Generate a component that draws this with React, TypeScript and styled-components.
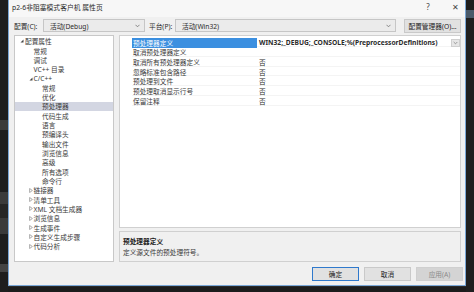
import React from "react";
import styled, { createGlobalStyle } from "styled-components";

const Global = createGlobalStyle`
  html, body { margin: 0; padding: 0; background: #1b1b1c; }
  body { font-family: "Noto Sans", "Noto Sans CJK SC", sans-serif; }
`;

const FONT = `"Noto Sans", "Noto Sans CJK SC", sans-serif`;

const Page = styled.div`
  width: 474px;
  height: 292px;
  display: grid;
  grid-template-columns: 8px 458px 8px;
  grid-template-rows: 286px 6px;
  background: #1b1b1c;
  overflow: hidden;
`;

const SideStrip = styled.div<{ $col: number }>`
  grid-column: ${(p) => p.$col};
  grid-row: 1 / span 2;
  display: flex;
  flex-direction: column;
  background: #1e1e1e;
`;

const Band = styled.div<{ $h: number; $c: string }>`
  height: ${(p) => p.$h}px;
  background: ${(p) => p.$c};
  flex: none;
`;

const Dialog = styled.div`
  grid-column: 2;
  grid-row: 1;
  background: #f0f0f0;
  border: 1px solid #7aa7d6;
  border-top: none;
  display: flex;
  flex-direction: column;
  font-family: ${FONT};
  font-size: 6.7px;
  color: #000;
  box-sizing: border-box;
  min-width: 0;
`;

const TitleBar = styled.div`
  height: 17px;
  box-sizing: border-box;
  display: flex;
  align-items: center;
  padding: 0 0 4px 3px;
  background: #f7f7f7;
  font-size: 6.8px;
  color: #2a2a2a;
`;

const TitleText = styled.div`
  flex: 1;
`;

const TitleBtn = styled.div<{ $w: number }>`
  width: ${(p) => p.$w}px;
  flex: none;
  text-align: center;
  font-size: 8px;
  color: #444;
`;

const ConfigRow = styled.div`
  display: flex;
  align-items: center;
  height: 13px;
  margin: 2px 4px 0 5px;
`;

const Label = styled.div<{ $w: number; $pad?: number }>`
  width: ${(p) => p.$w}px;
  padding-left: ${(p) => p.$pad ?? 0}px;
  box-sizing: border-box;
  flex: none;
  color: #2a2a2a;
`;

const Combo = styled.div<{ $w: number }>`
  width: ${(p) => p.$w}px;
  height: 13px;
  box-sizing: border-box;
  border: 1px solid #c6c6c6;
  background: #ebebeb;
  display: flex;
  align-items: center;
  padding-left: 6px;
  flex: none;
  color: #2a2a2a;
`;

const ComboText = styled.div`
  flex: 1;
`;

const Chevron = styled.svg`
  width: 5px;
  height: 4px;
  margin-right: 4px;
`;

const Spacer = styled.div<{ $w: number }>`
  width: ${(p) => p.$w}px;
  flex: none;
`;

const Button = styled.div<{ $w: number; $kind?: "default" | "disabled" | "normal" }>`
  width: ${(p) => p.$w}px;
  height: 14px;
  box-sizing: border-box;
  display: flex;
  align-items: center;
  justify-content: center;
  flex: none;
  border: 1px solid
    ${(p) => (p.$kind === "default" ? "#2f79cc" : p.$kind === "disabled" ? "#cfcfcf" : "#c9c9c9")};
  background: ${(p) => (p.$kind === "disabled" ? "#d4d4d4" : "#e1e1e1")};
  color: ${(p) => (p.$kind === "disabled" ? "#8a8a8a" : "#222")};
`;

const Main = styled.div`
  display: flex;
  gap: 5px;
  margin: 3px 4px 0 5px;
  height: 227px;
`;

const Tree = styled.div`
  width: 100px;
  flex: none;
  box-sizing: border-box;
  border: 1px solid #c8c8c8;
  background: #fff;
  padding-top: 0.6px;
`;

const TreeRow = styled.div<{ $level: number; $selected?: boolean }>`
  height: 9.32px;
  display: flex;
  align-items: center;
  padding-left: ${(p) => 5 + p.$level * 8.5}px;
  background: ${(p) => (p.$selected ? "#d3d6e2" : "transparent")};
  color: #3a3a3a;
  white-space: nowrap;
`;

const Arrow = styled.span`
  width: 4px;
  margin-right: 1px;
  display: inline-flex;
  align-items: center;
  flex: none;
`;

const RightCol = styled.div`
  flex: 1;
  min-width: 0;
  display: flex;
  flex-direction: column;
  gap: 3px;
`;

const Grid = styled.div`
  flex: 1;
  box-sizing: border-box;
  border: 1px solid #d0d0d0;
  background: #fff;
  padding: 1.5px 0 0 12px;
`;

const GridRow = styled.div`
  height: 9.72px;
  display: grid;
  grid-template-columns: 125px 1fr;
  border-bottom: 1px solid #f4f4f4;
  box-sizing: border-box;
`;

const NameCell = styled.div<{ $selected?: boolean }>`
  display: flex;
  align-items: center;
  padding-left: 1px;
  background: ${(p) => (p.$selected ? "#3b8fe0" : "transparent")};
  color: ${(p) => (p.$selected ? "#fff" : "#3a3a3a")};
  white-space: nowrap;
`;

const ValueCell = styled.div<{ $bold?: boolean }>`
  display: flex;
  align-items: center;
  padding-left: 2px;
  font-weight: ${(p) => (p.$bold ? 700 : 400)};
  color: #2a2a2a;
  white-space: nowrap;
  min-width: 0;
`;

const ValueText = styled.div`
  flex: 1;
`;

const DropBtn = styled.div`
  width: 9px;
  height: 8px;
  box-sizing: border-box;
  border: 1px solid #cfcfcf;
  background: #e6e6e6;
  display: flex;
  align-items: center;
  justify-content: center;
  flex: none;
`;

const Desc = styled.div`
  height: 31px;
  box-sizing: border-box;
  border: 1px solid #d0d0d0;
  background: #f0f0f0;
  padding: 1px 3px;
  display: flex;
  flex-direction: column;
  justify-content: center;
  gap: 1px;
`;

const DescTitle = styled.div`
  font-weight: 700;
  color: #222;
`;

const DescBody = styled.div`
  color: #3a3a3a;
`;

const Footer = styled.div`
  display: flex;
  justify-content: flex-end;
  gap: 5px;
  margin: 5px 2px 0 0;
`;

const Bottom = styled.div`
  grid-column: 2;
  grid-row: 2;
  background: #1c1c1c;
  border-top: 1px solid #2a2a2a;
`;

const ChevronDown = () => (
  <Chevron viewBox="0 0 5 4">
    <path d="M0.5 0.8 L2.5 2.8 L4.5 0.8" fill="none" stroke="#707070" strokeWidth="0.8" />
  </Chevron>
);

const Expanded = () => (
  <svg width="4" height="4" viewBox="0 0 4 4">
    <path d="M3.5 0.5 L3.5 3.5 L0.5 3.5 Z" fill="#444" />
  </svg>
);

const Collapsed = () => (
  <svg width="4" height="5" viewBox="0 0 4 5">
    <path d="M0.6 0.5 L3.4 2.5 L0.6 4.5 Z" fill="none" stroke="#777" strokeWidth="0.6" />
  </svg>
);

type Node = { label: string; level: number; arrow?: "open" | "closed"; selected?: boolean };

const tree: Node[] = [
  { label: "配置属性", level: 0, arrow: "open" },
  { label: "常规", level: 1 },
  { label: "调试", level: 1 },
  { label: "VC++ 目录", level: 1 },
  { label: "C/C++", level: 1, arrow: "open" },
  { label: "常规", level: 2 },
  { label: "优化", level: 2 },
  { label: "预处理器", level: 2, selected: true },
  { label: "代码生成", level: 2 },
  { label: "语言", level: 2 },
  { label: "预编译头", level: 2 },
  { label: "输出文件", level: 2 },
  { label: "浏览信息", level: 2 },
  { label: "高级", level: 2 },
  { label: "所有选项", level: 2 },
  { label: "命令行", level: 2 },
  { label: "链接器", level: 1, arrow: "closed" },
  { label: "清单工具", level: 1, arrow: "closed" },
  { label: "XML 文档生成器", level: 1, arrow: "closed" },
  { label: "浏览信息", level: 1, arrow: "closed" },
  { label: "生成事件", level: 1, arrow: "closed" },
  { label: "自定义生成步骤", level: 1, arrow: "closed" },
  { label: "代码分析", level: 1, arrow: "closed" },
];

const props: { name: string; value: string }[] = [
  { name: "取消预处理器定义", value: "" },
  { name: "取消所有预处理器定义", value: "否" },
  { name: "忽略标准包含路径", value: "否" },
  { name: "预处理到文件", value: "否" },
  { name: "预处理取消显示行号", value: "否" },
  { name: "保留注释", value: "否" },
];

export default function App() {
  return (
    <>
      <Global />
      <Page>
        <SideStrip $col={1}>
          <Band $h={120} $c="#1e1e1e" />
          <Band $h={10} $c="#3a3a3a" />
          <Band $h={62} $c="#1e1e1e" />
          <Band $h={12} $c="#3b3b3b" />
          <Band $h={14} $c="#262626" />
          <Band $h={16} $c="#3a3a3a" />
          <Band $h={30} $c="#1e1e1e" />
          <Band $h={8} $c="#444444" />
          <Band $h={20} $c="#1e1e1e" />
        </SideStrip>
        <Dialog>
          <TitleBar>
            <TitleText>p2-6非阻塞模式客户机 属性页</TitleText>
            <TitleBtn $w={14}>?</TitleBtn>
            <Spacer $w={14} />
            <TitleBtn $w={12}>✕</TitleBtn>
            <Spacer $w={4} />
          </TitleBar>
          <ConfigRow>
            <Label $w={29}>配置(C):</Label>
            <Combo $w={102}>
              <ComboText>活动(Debug)</ComboText>
              <ChevronDown />
            </Combo>
            <Label $w={30} $pad={4}>平台(P):</Label>
            <Combo $w={221}>
              <ComboText>活动(Win32)</ComboText>
              <ChevronDown />
            </Combo>
            <Spacer $w={8} />
            <Button $w={57}>配置管理器(O)...</Button>
          </ConfigRow>
          <Main>
            <Tree>
              {tree.map((n, i) => (
                <TreeRow key={i} $level={n.level} $selected={n.selected}>
                  <Arrow>{n.arrow === "open" ? <Expanded /> : n.arrow === "closed" ? <Collapsed /> : null}</Arrow>
                  {n.label}
                </TreeRow>
              ))}
            </Tree>
            <RightCol>
              <Grid>
                <GridRow>
                  <NameCell $selected>预处理器定义</NameCell>
                  <ValueCell $bold>
                    <ValueText>WIN32;_DEBUG;_CONSOLE;%(PreprocessorDefinitions)</ValueText>
                    <DropBtn>
                      <svg width="5" height="4" viewBox="0 0 5 4">
                        <path d="M0.7 1 L2.5 2.8 L4.3 1" fill="none" stroke="#777" strokeWidth="0.7" />
                      </svg>
                    </DropBtn>
                  </ValueCell>
                </GridRow>
                {props.map((p, i) => (
                  <GridRow key={i}>
                    <NameCell>{p.name}</NameCell>
                    <ValueCell>
                      <ValueText>{p.value}</ValueText>
                    </ValueCell>
                  </GridRow>
                ))}
              </Grid>
              <Desc>
                <DescTitle>预处理器定义</DescTitle>
                <DescBody>定义源文件的预处理符号。</DescBody>
              </Desc>
            </RightCol>
          </Main>
          <Footer>
            <Button $w={47} $kind="default">确定</Button>
            <Button $w={47}>取消</Button>
            <Button $w={47} $kind="disabled">应用(A)</Button>
          </Footer>
        </Dialog>
        <SideStrip $col={3}>
          <Band $h={10} $c="#1e1e1e" />
          <Band $h={8} $c="#4a5a6a" />
          <Band $h={274} $c="#1f1f1f" />
        </SideStrip>
        <Bottom />
      </Page>
    </>
  );
}
